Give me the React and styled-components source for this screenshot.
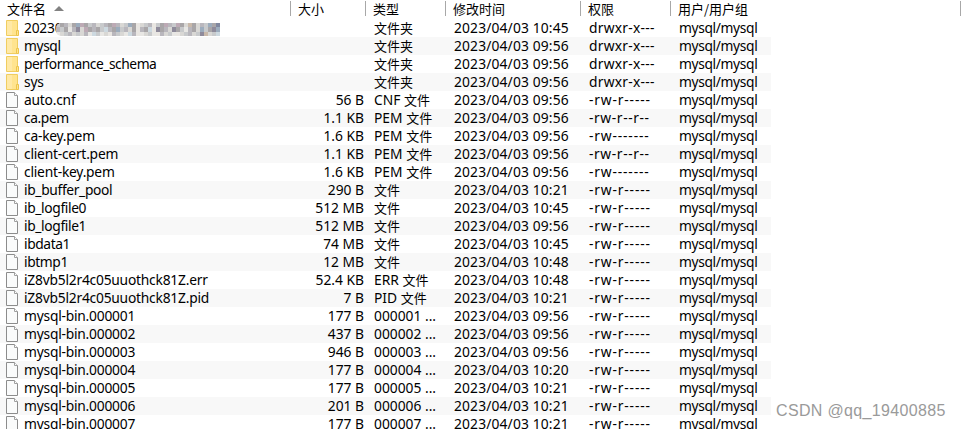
import React from 'react'
import styled, { createGlobalStyle } from 'styled-components'


/* Styled components: Start */

const GlobalStyle = createGlobalStyle`
    body {
        margin: 0;
        background-color: #ffffff;
        overflow: hidden;
    }
`

const FileListStyled = styled.div`
    position: relative;
    width: 961px;
    height: 429px;
    overflow: hidden;
    background-color: #ffffff;
    color: #000000;
    font-family: 'Noto Sans', 'Noto Sans CJK SC', sans-serif;
    font-size: 13.8px;
`

const HeaderStyled = styled.div`
    display: grid;
    grid-template-columns: 291px 75px 80px 135px 90px 290px;
    height: 19px;
    font-family: 'Noto Sans CJK SC', sans-serif;
    font-size: 13px;
`

const HeaderCellStyled = styled.div`
    display: flex;
    align-items: center;
    gap: 8px;
    box-sizing: border-box;
    height: 15px;
    margin-top: 1px;
    padding-left: 7px;
    border-right: 1px solid #a8a8a8;
    line-height: 15px;
    white-space: nowrap;
`

const SortArrowStyled = styled.span`
    border: 5px solid transparent;
    border-top: 0;
    border-bottom-color: #828282;
`

const RowStyled = styled.div`
    display: grid;
    grid-template-columns: 6px 18px 267px 73px 10px 80px 135px 90px 92px;
    width: 771px;
    height: 18px;
    line-height: 18px;
    background-color: ${({ $striped }) => ($striped ? '#f8f8f8' : '#ffffff')};
`

const IconStyled = styled.svg`
    grid-column: 2;
    display: block;
    width: 14px;
    height: 18px;
`

const CellStyled = styled.div`
    display: flex;
    justify-content: ${({ $right }) => ($right ? 'flex-end' : 'flex-start')};
    grid-column: ${({ $column }) => $column};
    height: 18px;
    letter-spacing: ${({ $spacing }) => $spacing || 0}px;
    white-space: pre;
`

const ChineseStyled = styled.span`
    font-family: 'Noto Sans CJK SC', sans-serif;
    font-size: 13px;
    letter-spacing: 0;
`

const MosaicStyled = styled.div`
    display: grid;
    grid-template-columns: repeat(41, 4px);
    grid-template-rows: 4px 5px 4px;
    height: 13px;
    margin: 4px 0 0 -6px;
    border-radius: 5px 0 0 5px;
    overflow: hidden;
`

const MosaicCellStyled = styled.span`
    background-color: ${({ $color }) => $color};
`

const WatermarkStyled = styled.div`
    position: absolute;
    left: 776px;
    top: 401px;
    color: #9a9a9a;
    font-family: 'Liberation Sans', sans-serif;
    font-size: 16px;
    letter-spacing: 0.35px;
    line-height: 20px;
    white-space: nowrap;
`

/* Styled components: End */

const columns = ['文件名', '大小', '类型', '修改时间', '权限', '用户/用户组']

const files = [
    { name: '20230', type: '文件夹', time: '10:45', mode: 'drwxr-x---', folder: true, hidden: true },
    { name: 'mysql', spacing: -0.4, type: '文件夹', time: '09:56', mode: 'drwxr-x---', folder: true },
    { name: 'performance_schema', spacing: -0.46, type: '文件夹', time: '09:56', mode: 'drwxr-x---', folder: true },
    { name: 'sys', type: '文件夹', time: '09:56', mode: 'drwxr-x---', folder: true },
    { name: 'auto.cnf', size: '56 B', type: 'CNF 文件', time: '09:56', mode: '-rw-r-----' },
    { name: 'ca.pem', spacing: -0.4, size: '1.1 KB', type: 'PEM 文件', time: '09:56', mode: '-rw-r--r--' },
    { name: 'ca-key.pem', size: '1.6 KB', type: 'PEM 文件', time: '09:56', mode: '-rw-------' },
    { name: 'client-cert.pem', size: '1.1 KB', type: 'PEM 文件', time: '09:56', mode: '-rw-r--r--' },
    { name: 'client-key.pem', size: '1.6 KB', type: 'PEM 文件', time: '09:56', mode: '-rw-------' },
    { name: 'ib_buffer_pool', spacing: -0.34, size: '290 B', type: '文件', time: '10:21', mode: '-rw-r-----' },
    { name: 'ib_logfile0', spacing: -0.36, size: '512 MB', type: '文件', time: '10:45', mode: '-rw-r-----' },
    { name: 'ib_logfile1', spacing: -0.36, size: '512 MB', type: '文件', time: '09:56', mode: '-rw-r-----' },
    { name: 'ibdata1', spacing: -0.4, size: '74 MB', type: '文件', time: '10:45', mode: '-rw-r-----' },
    { name: 'ibtmp1', spacing: -0.4, size: '12 MB', type: '文件', time: '10:48', mode: '-rw-r-----' },
    { name: 'iZ8vb5l2r4c05uuothck81Z.err', size: '52.4 KB', type: 'ERR 文件', time: '10:48', mode: '-rw-r-----' },
    { name: 'iZ8vb5l2r4c05uuothck81Z.pid', size: '7 B', type: 'PID 文件', time: '10:21', mode: '-rw-r-----' },
    { name: 'mysql-bin.000001', size: '177 B', type: '000001 ...', time: '09:56', mode: '-rw-r-----' },
    { name: 'mysql-bin.000002', size: '437 B', type: '000002 ...', time: '09:56', mode: '-rw-r-----' },
    { name: 'mysql-bin.000003', size: '946 B', type: '000003 ...', time: '09:56', mode: '-rw-r-----' },
    { name: 'mysql-bin.000004', size: '177 B', type: '000004 ...', time: '10:20', mode: '-rw-r-----' },
    { name: 'mysql-bin.000005', size: '177 B', type: '000005 ...', time: '10:21', mode: '-rw-r-----' },
    { name: 'mysql-bin.000006', size: '201 B', type: '000006 ...', time: '10:21', mode: '-rw-r-----' },
    { name: 'mysql-bin.000007', size: '177 B', type: '000007 ...', time: '10:21', mode: '-rw-r-----' },
]

const modeSpacing = {
    'drwxr-x---': 0.25,
    '-rw-r-----': 0.84,
    '-rw-r--r--': 0.6,
    '-rw-------': 0.84,
}

const shades = {
    a: '#8f8b9b', b: '#a9a6a8', c: '#b9b7bd', d: '#c8cacc', e: '#d9d8d5', f: '#e8e7e4',
    g: '#9cacbd', h: '#c9b9aa', i: '#cdd9e0', j: '#e9e6e2', k: '#7f879f', l: '#bdaab5',
}

const mosaic = [
    'dbcebglbdcedcblcedgbjedcjdblcdlbehbecdgbk',
    'cdbfcaelbcbdicbgdcebjcbijabceabdfcbegdbag',
    'fedcedecfidfejcdeficjfedfjcedfjedcedahedi',
].join('').split('')

const FolderIcon = () => (
    <IconStyled viewBox="0 0 14 18">
        <path d="M.5 1.5h11v15H.5z" fill="#ffe48f" stroke="#f0cd60" />
        <path d="M1 2h5v14H1z" fill="#ffe9a6" />
        <path d="M10.5 11.5h2v5h-2z" fill="#ffe48f" stroke="#edc54b" />
    </IconStyled>
)

const FileIcon = () => (
    <IconStyled viewBox="0 0 14 18">
        <path d="M.5 1.5h8l3 3v12H.5z" fill="#fafbfb" stroke="#8c8c8c" />
        <path d="M8.5 1.5v3h3" fill="#ffffff" stroke="#a0a0a0" />
    </IconStyled>
)

const FileType = ({ text }) => {
    const [, latin, chinese] = text.match(/^([^\u4e00-\u9fff]*)(.*)$/)
    return (
        <CellStyled $column={6}>
            {latin}
            {chinese && <ChineseStyled>{chinese}</ChineseStyled>}
        </CellStyled>
    )
}

const FileRow = ({ file, striped }) => {
    return (
        <RowStyled $striped={striped}>
            {file.folder ? <FolderIcon /> : <FileIcon />}
            <CellStyled $column={3} $spacing={file.spacing ?? -0.22}>
                {file.name}
                {file.hidden && (
                    <MosaicStyled>
                        {mosaic.map((key, i) => <MosaicCellStyled key={i} $color={shades[key]} />)}
                    </MosaicStyled>
                )}
            </CellStyled>
            <CellStyled $column={4} $right>{file.size}</CellStyled>
            <FileType text={file.type} />
            <CellStyled $column={7} $spacing={0.16}>2023/04/03 {file.time}</CellStyled>
            <CellStyled $column={8} $spacing={modeSpacing[file.mode]}>{file.mode}</CellStyled>
            <CellStyled $column={9} $spacing={-0.36}>mysql/mysql</CellStyled>
        </RowStyled>
    )
}

export default function App() {
    return (
        <FileListStyled>
            <GlobalStyle />
            <HeaderStyled>
                {columns.map((column, i) => (
                    <HeaderCellStyled key={column}>
                        {column}
                        {i === 0 && <SortArrowStyled />}
                    </HeaderCellStyled>
                ))}
            </HeaderStyled>
            {files.map((file, i) => (
                <FileRow key={file.name} file={file} striped={i % 2 === 1} />
            ))}
            <WatermarkStyled>CSDN @qq_19400885</WatermarkStyled>
        </FileListStyled>
    )
}
